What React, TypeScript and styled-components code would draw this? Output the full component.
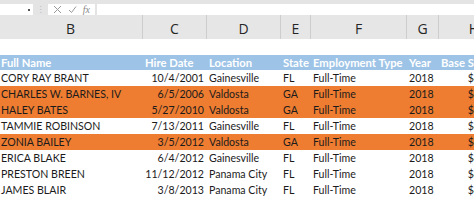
import styled, { createGlobalStyle } from "styled-components";

const GlobalStyle = createGlobalStyle`
  html, body {
    margin: 0;
    padding: 0;
    background: #fff;
    overflow: hidden;
  }
`;

const COLS = "144px 64px 74px 30px 96px 32px 71px";

const Page = styled.div`
  width: 474px;
  height: 214px;
  overflow: hidden;
  background: #fff;
`;

const FormulaBar = styled.div`
  display: flex;
  align-items: stretch;
  height: 11px;
  padding-top: 4px;
  background: #e4e4e4;
`;

const NameBox = styled.div`
  display: flex;
  align-items: center;
  justify-content: flex-end;
  width: 33px;
  padding-right: 3px;
  box-sizing: border-box;
  background: #fff;
`;

const Caret = styled.span`
  width: 2px;
  height: 2px;
  background: #555;
`;

const Grip = styled.div`
  display: flex;
  align-items: center;
  justify-content: center;
  width: 15px;
  color: #b5b5b5;
  font: 8px "DejaVu Sans", sans-serif;
`;

const IconBox = styled.div`
  display: flex;
  align-items: center;
  justify-content: space-around;
  width: 47px;
  background: #fff;
  padding: 0 2px;
  box-sizing: border-box;
`;

const Fx = styled.span`
  font: italic 10px "Liberation Serif", serif;
  color: #888;
`;

const FormulaInput = styled.div`
  flex: 1;
  margin-left: 2px;
  background: #fff;
`;

const ColumnHeaders = styled.div`
  display: grid;
  grid-template-columns: ${COLS};
  margin-left: -1px;
  height: 24px;
  background: #e6e6e6;
`;

const ColumnLetter = styled.div`
  display: flex;
  align-items: center;
  justify-content: center;
  border-right: 1px solid #cdcdcd;
  font: 14px "Open Sans", sans-serif;
  color: #262626;
  padding-top: 2px;
`;

const Sheet = styled.div`
  margin-left: -1px;
`;

const Row = styled.div<{ $tone: "blank" | "head" | "white" | "orange" }>`
  display: grid;
  grid-template-columns: ${COLS};
  height: ${(p) => (p.$tone === "head" ? 15 : 16)}px;
  background: ${(p) =>
    p.$tone === "head" ? "#9dc3e6" : p.$tone === "orange" ? "#ee7d31" : "#fff"};
  color: ${(p) => (p.$tone === "head" ? "#fff" : "#1b1b1b")};
  font-weight: ${(p) => (p.$tone === "head" ? 700 : 400)};
  font-family: Lato, "Open Sans", sans-serif;
  font-size: ${(p) => (p.$tone === "head" ? 11.25 : 10.6)}px;
`;

const Cell = styled.div<{ $align?: "left" | "right" }>`
  display: flex;
  align-items: center;
  justify-content: ${(p) => (p.$align === "right" ? "flex-end" : "flex-start")};
  padding: 0 3px 1px 2px;
  white-space: nowrap;
  overflow: hidden;
`;

type Employee = {
  name: string;
  hired: string;
  city: string;
  state: string;
  highlight?: boolean;
};

const employees: Employee[] = [
  { name: "CORY RAY BRANT", hired: "10/4/2001", city: "Gainesville", state: "FL" },
  { name: "CHARLES W. BARNES, IV", hired: "6/5/2006", city: "Valdosta", state: "GA", highlight: true },
  { name: "HALEY BATES", hired: "5/27/2010", city: "Valdosta", state: "GA", highlight: true },
  { name: "TAMMIE ROBINSON", hired: "7/13/2011", city: "Gainesville", state: "FL" },
  { name: "ZONIA BAILEY", hired: "3/5/2012", city: "Valdosta", state: "GA", highlight: true },
  { name: "ERICA BLAKE", hired: "6/4/2012", city: "Gainesville", state: "FL" },
  { name: "PRESTON BREEN", hired: "11/12/2012", city: "Panama City", state: "FL" },
  { name: "JAMES BLAIR", hired: "3/8/2013", city: "Panama City", state: "FL" },
];

function CrossIcon() {
  return (
    <svg width="9" height="9" viewBox="0 0 9 9">
      <path d="M1 1 L8 8 M8 1 L1 8" stroke="#9a9a9a" strokeWidth="1" fill="none" />
    </svg>
  );
}

function CheckIcon() {
  return (
    <svg width="9" height="9" viewBox="0 0 9 9">
      <path d="M1 5 L3.5 7.5 L8 1.5" stroke="#9a9a9a" strokeWidth="1" fill="none" />
    </svg>
  );
}

export default function App() {
  return (
    <Page>
      <GlobalStyle />
      <FormulaBar>
        <NameBox>
          <Caret />
        </NameBox>
        <Grip>⋮</Grip>
        <IconBox>
          <CrossIcon />
          <CheckIcon />
          <Fx>fx</Fx>
        </IconBox>
        <FormulaInput />
      </FormulaBar>

      <ColumnHeaders>
        {["B", "C", "D", "E", "F", "G", "H"].map((l) => (
          <ColumnLetter key={l}>{l}</ColumnLetter>
        ))}
      </ColumnHeaders>

      <Sheet>
        <Row $tone="blank" />
        <Row $tone="head">
          <Cell>Full Name</Cell>
          <Cell>Hire Date</Cell>
          <Cell>Location</Cell>
          <Cell>State</Cell>
          <Cell>Employment Type</Cell>
          <Cell>Year</Cell>
          <Cell>Base Salary</Cell>
        </Row>
        {employees.map((e) => (
          <Row key={e.name} $tone={e.highlight ? "orange" : "white"}>
            <Cell>{e.name}</Cell>
            <Cell $align="right">{e.hired}</Cell>
            <Cell>{e.city}</Cell>
            <Cell>{e.state}</Cell>
            <Cell>Full-Time</Cell>
            <Cell>2018</Cell>
            <Cell $align="right">$45,000</Cell>
          </Row>
        ))}
      </Sheet>
    </Page>
  );
}
